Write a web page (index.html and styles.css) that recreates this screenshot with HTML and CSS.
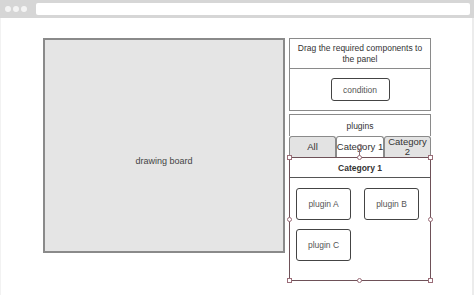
FILE: index.html
```html
<!DOCTYPE html>
<html lang="en">
<head>
  <meta charset="UTF-8" />
  <title>Plugin panel</title>
  <link rel="stylesheet" href="styles.css">
</head>
<body>

  <!-- Browser chrome -->
  <div class="chrome">
    <div class="dots"><span></span><span></span><span></span></div>
    <div class="address"></div>
  </div>

  <!-- Page -->
  <div class="page">
    <div class="board">drawing board</div>

    <div class="side">
      <div class="box">
        <div class="hint">Drag the required components to the panel</div>
        <div class="cond-row"><div class="btn">condition</div></div>
      </div>

      <div class="plugins">
        <div class="plugins-title">plugins</div>
        <div class="tabs">
          <div class="tab">All</div>
          <div class="tab active">Category 1</div>
          <div class="tab">Category 2</div>
        </div>
        <div class="panel">
          <div class="panel-head">Category 1</div>
          <div class="grid">
            <div class="btn item">plugin A</div>
            <div class="btn item">plugin B</div>
            <div class="btn item">plugin C</div>
          </div>

          <!-- selection handles -->
          <span class="rot-line"></span>
          <span class="h circle rot"></span>
          <span class="h sq tl"></span>
          <span class="h sq tr"></span>
          <span class="h sq bl"></span>
          <span class="h sq br"></span>
          <span class="h circle tm"></span>
          <span class="h circle bm"></span>
          <span class="h circle ml"></span>
          <span class="h circle mr"></span>
        </div>
      </div>
    </div>
  </div>

</body>
</html>
```

FILE: styles.css
```css
body {
  margin: 0;
  font-family: "Liberation Sans", Arial, sans-serif;
  color: #333;
  background: #fff;
}

/* Browser chrome */
.chrome {
  height: 18px;
  background: #d6d6d6;
  display: flex;
  align-items: center;
  padding: 0 4px 0 5px;
  gap: 9px;
}

.dots {
  display: flex;
  gap: 2px;
}

.dots span {
  width: 6px;
  height: 6px;
  border-radius: 50%;
  background: #f4f4f4;
}

.address {
  flex: 1;
  height: 12px;
  background: #fff;
  border-radius: 2px;
}

/* Page */
.page {
  height: 277px;
  box-sizing: border-box;
  border-right: 2px solid #ececec;
  border-left: 1px solid #f2f2f2;
  display: flex;
  gap: 4px;
  padding: 20px 0 0 42px;
}

.board {
  width: 242px;
  height: 215px;
  box-sizing: border-box;
  background: #e5e5e5;
  border: 2px solid #8a8a8a;
  display: flex;
  align-items: center;
  justify-content: center;
  padding-top: 30px;
  font-size: 9px;
  color: #444;
}

.side {
  width: 142px;
  display: flex;
  flex-direction: column;
  gap: 3px;
}

.box {
  border: 1px solid #8a8a8a;
}

.hint {
  height: 30px;
  border-bottom: 1px solid #8a8a8a;
  font-size: 8.5px;
  line-height: 11px;
  text-align: center;
  padding: 4px 6px 0;
  box-sizing: border-box;
}

.cond-row {
  height: 41px;
  display: flex;
  align-items: center;
  justify-content: center;
}

.btn {
  width: 59px;
  height: 23px;
  box-sizing: border-box;
  border: 1.5px solid #444;
  border-radius: 3px;
  display: flex;
  align-items: center;
  justify-content: center;
  font-size: 8.5px;
  color: #555;
}

/* Plugins */
.plugins-title {
  height: 22px;
  box-sizing: border-box;
  border: 1px solid #8a8a8a;
  border-bottom: none;
  display: flex;
  align-items: center;
  justify-content: center;
  font-size: 8.5px;
}

.tabs {
  display: flex;
  height: 21px;
}

.tab {
  width: 47px;
  box-sizing: border-box;
  border: 1px solid #8a8a8a;
  border-bottom: none;
  border-radius: 3px 3px 0 0;
  background: #e3e3e3;
  display: flex;
  align-items: center;
  justify-content: center;
  text-align: center;
  font-size: 9.5px;
  line-height: 10px;
  padding: 0 4px;
}

.tab.active {
  width: 48px;
  background: #fff;
  padding: 0;
  white-space: nowrap;
  overflow: visible;
}

.panel {
  position: relative;
  height: 124px;
  box-sizing: border-box;
  border: 1px solid #6e5158;
}

.panel-head {
  height: 19px;
  border-bottom: 1px solid #555;
  display: flex;
  align-items: center;
  justify-content: center;
  font-size: 8.5px;
  font-weight: bold;
}

.grid {
  display: grid;
  grid-template-columns: 55px 55px;
  column-gap: 13px;
  row-gap: 9px;
  padding: 10px 0 0 6px;
}

.item {
  width: 55px;
  height: 32px;
}

/* Selection handles */
.h {
  position: absolute;
  width: 5px;
  height: 5px;
  box-sizing: border-box;
  background: #fff;
  border: 1px solid #9a6d78;
}

.circle {
  border-radius: 50%;
}

.tl { left: -3px; top: -3px; }
.tr { right: -3px; top: -3px; }
.bl { left: -3px; bottom: -3px; }
.br { right: -3px; bottom: -3px; }
.tm { left: 67px; top: -3px; }
.bm { left: 67px; bottom: -3px; }
.ml { left: -3px; top: 59px; }
.mr { right: -3px; top: 59px; }

.rot {
  left: 67px;
  top: -14px;
  width: 6px;
  height: 6px;
  background: transparent;
  border-color: #8a6a70;
}

.rot-line {
  position: absolute;
  left: 69px;
  top: -8px;
  width: 1px;
  height: 6px;
  background: #8a6a70;
}
```
